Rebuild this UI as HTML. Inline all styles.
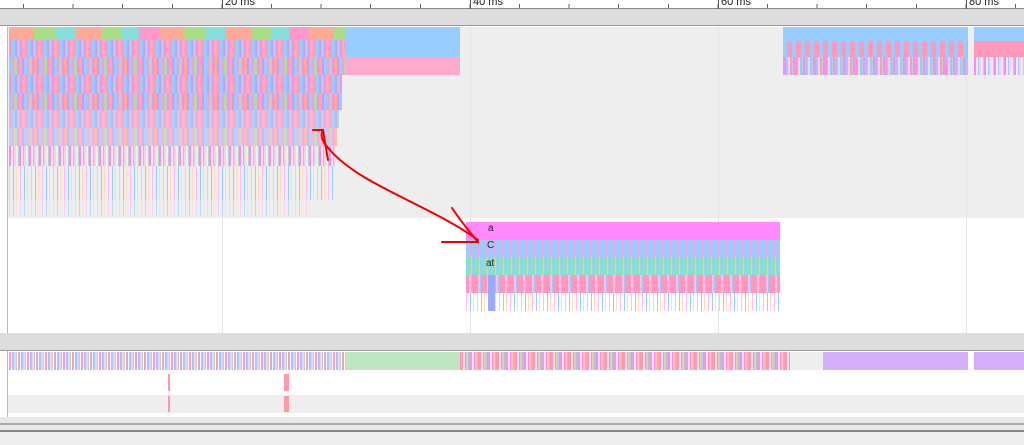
<!DOCTYPE html>
<html><head><style>
*{margin:0;padding:0;box-sizing:border-box}
body{width:1024px;height:445px;overflow:hidden;background:#fff;font-family:"Liberation Sans",sans-serif;position:relative}
div{position:absolute}
.s1{background:repeating-linear-gradient(90deg,#f9c 0 3px,#9cf 3px 6px,#c9f 6px 8px,#9dc 8px 11px,#f8f 11px 13px,#fab 13px 16px)}
.s2{background:repeating-linear-gradient(90deg,#9cf 0 3px,#f9d 3px 5px,#ada 5px 8px,#f8f 8px 10px,#fa9 10px 13px,#c9f 13px 15px)}
.s3{background:repeating-linear-gradient(90deg,#f8f 0 2px,#fff0 2px 4px,#9cf 4px 5px,#fce 5px 7px,#fff0 7px 9px,#adb 9px 10px)}
.s4{background:repeating-linear-gradient(90deg,#fbf 0 1px,#fff0 1px 4px,#9cf 4px 5px,#fff0 5px 7px,#fdb 7px 8px,#fff0 8px 11px)}
.lab{font-size:11px;color:#222}
</style></head><body>
<!-- ruler -->
<div style="left:0;top:0;width:1024px;height:9px;background:#fff;border-bottom:1px solid #888"></div>
<div style="left:0;top:9px;width:1024px;height:17px;background:#ddd;border-bottom:1px solid #999"></div>
<div style="left:0;top:4px;width:1024px;height:4px;background:repeating-linear-gradient(90deg,#fff 0 23px,#666 23px 24px,#fff 24px 49.6px)"></div>
<div style="left:222px;top:0;width:1px;height:9px;background:#555"></div><div class="lab" style="left:225px;top:-4px;background:#fff">20 ms</div>
<div style="left:470px;top:0;width:1px;height:9px;background:#555"></div><div class="lab" style="left:473px;top:-4px;background:#fff">40 ms</div>
<div style="left:718px;top:0;width:1px;height:9px;background:#555"></div><div class="lab" style="left:721px;top:-4px;background:#fff">60 ms</div>
<div style="left:966px;top:0;width:1px;height:9px;background:#555"></div><div class="lab" style="left:969px;top:-4px;background:#fff">80 ms</div>
<!-- main gray region -->
<div style="left:8px;top:27px;width:1016px;height:191px;background:#eee"></div>
<div style="left:0;top:27px;width:8px;height:306px;background:#fff;border-right:1px solid #bbb"></div>
<!-- grid lines -->
<div style="left:222px;top:27px;width:1px;height:306px;background:#e4e4e4"></div>
<div style="left:470px;top:27px;width:1px;height:306px;background:#e4e4e4"></div>
<div style="left:718px;top:27px;width:1px;height:306px;background:#e4e4e4"></div>
<div style="left:966px;top:27px;width:1px;height:306px;background:#e4e4e4"></div>
<!-- header row boxes -->
<div style="left:9px;top:27px;width:336px;height:13px;background:repeating-linear-gradient(90deg,#fa9 0 25px,#ad8 25px 46px,#8dd 46px 66px,#fa9 66px 92px,#ad8 92px 112px,#8dd 112px 130px,#f9c 130px 150px)"></div>
<div class="s1" style="left:9px;top:40px;width:336px;height:17px"></div>
<div class="s2" style="left:9px;top:57px;width:336px;height:18px"></div>
<div class="s1" style="left:9px;top:75px;width:333px;height:18px"></div>
<div class="s2" style="left:9px;top:93px;width:333px;height:17px"></div>
<div class="s1" style="left:9px;top:110px;width:330px;height:18px;opacity:.8"></div>
<div class="s2" style="left:9px;top:128px;width:328px;height:18px;opacity:.7"></div>
<div class="s3" style="left:9px;top:146px;width:326px;height:20px"></div>
<div class="s4" style="left:9px;top:166px;width:326px;height:34px"></div>
<div class="s4" style="left:9px;top:200px;width:300px;height:16px;opacity:.6"></div>
<div style="left:345px;top:27px;width:115px;height:14px;background:#9cf"></div>
<div style="left:345px;top:41px;width:115px;height:16px;background:#9cf"></div>
<div style="left:345px;top:57px;width:115px;height:18px;background:#fac"></div>
<!-- right blocks -->
<div style="left:783px;top:27px;width:185px;height:14px;background:#9cf"></div>
<div style="left:783px;top:41px;width:185px;height:16px;background:repeating-linear-gradient(90deg,#9cf 0 4px,#f9b 4px 9px)"></div>
<div style="left:783px;top:57px;width:185px;height:18px;background:repeating-linear-gradient(90deg,#f9c 0 3px,#9cf 3px 6px)"></div>
<div class="s3" style="left:783px;top:57px;width:185px;height:18px"></div>
<div style="left:974px;top:27px;width:50px;height:14px;background:#9cf"></div>
<div style="left:974px;top:41px;width:50px;height:16px;background:#f9b"></div>
<div class="s3" style="left:974px;top:57px;width:50px;height:18px"></div>
<!-- selected block -->
<div style="left:466px;top:222px;width:314px;height:18px;background:#f8f"></div>
<div style="left:466px;top:240px;width:314px;height:17px;background:repeating-linear-gradient(90deg,#9cf 0 4px,#f9d 4px 5px,#9cf 5px 8px)"></div>
<div style="left:466px;top:257px;width:314px;height:18px;background:repeating-linear-gradient(90deg,#8dd 0 3px,#ad8 3px 5px,#ec9 5px 6px,#9cf 6px 8px)"></div>
<div style="left:466px;top:275px;width:314px;height:18px;background:repeating-linear-gradient(90deg,#f9b 0 3px,#fbe 3px 5px,#9cf 5px 6px,#f9b 6px 9px)"></div>
<div class="s4" style="left:466px;top:293px;width:314px;height:18px"></div>
<div style="left:488px;top:275px;width:7px;height:36px;background:#9af"></div>
<div class="lab" style="left:488px;top:223px;font-size:10px">a</div>
<div class="lab" style="left:487px;top:240px;font-size:10px">C</div>
<div class="lab" style="left:486px;top:258px;font-size:10px">at</div>
<!-- bottom -->
<div style="left:0;top:333px;width:1024px;height:18px;background:#ddd;border-bottom:1px solid #999"></div>
<div style="left:0;top:351px;width:8px;height:66px;border-right:1px solid #bbb"></div>
<div style="left:9px;top:352px;width:336px;height:18px;background:repeating-linear-gradient(90deg,#f9c 0 2px,#fff 2px 3px,#9cf 3px 5px,#fce 5px 7px,#adb 7px 8px,#fff 8px 9px)"></div>
<div style="left:345px;top:352px;width:115px;height:18px;background:#bde6c0"></div>
<div style="left:460px;top:352px;width:330px;height:18px;background:repeating-linear-gradient(90deg,#f9b 0 3px,#fdf 3px 5px,#f8f 5px 6px,#ec9 6px 8px,#9cf 8px 9px)"></div>
<div style="left:790px;top:352px;width:33px;height:18px;background:#eee"></div>
<div style="left:823px;top:352px;width:145px;height:18px;background:#d4aef8"></div>
<div style="left:974px;top:352px;width:50px;height:18px;background:#d4aef8"></div>
<div style="left:8px;top:395px;width:1016px;height:18px;background:#eee"></div>
<div style="left:168px;top:374px;width:2px;height:17px;background:#f9a"></div>
<div style="left:168px;top:396px;width:2px;height:16px;background:#f9a"></div>
<div style="left:284px;top:374px;width:5px;height:17px;background:#f9a"></div>
<div style="left:284px;top:396px;width:5px;height:16px;background:#f9a"></div>
<div style="left:0;top:417px;width:1024px;height:28px;background:#e8e8e8"></div>
<div style="left:0;top:423px;width:1024px;height:2px;background:#aaa"></div>
<div style="left:0;top:430px;width:1024px;height:2px;background:#888"></div>
<div style="left:0;top:432px;width:1024px;height:13px;background:#eee"></div>
<!-- arrow -->
<svg style="position:absolute;left:0;top:0" width="1024" height="445">
<g fill="none" stroke="#e00" stroke-width="2" stroke-linecap="round">
<path d="M478 240 C430 205 360 185 330 150 C322 142 320 135 323 130"/>
<path d="M313 130 L323 130 L328 160"/>
<path d="M452 208 C460 220 468 230 478 242"/>
<path d="M442 242 L478 242"/>
</g></svg>
</body></html>
